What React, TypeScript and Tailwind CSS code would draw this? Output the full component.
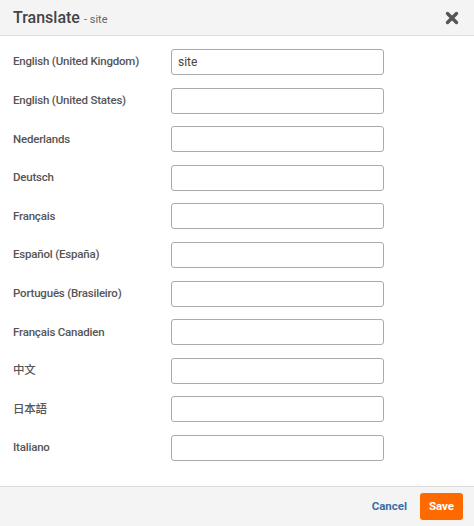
import { X } from "lucide-react";

const languages = [
  { label: "English (United Kingdom)", value: "site" },
  { label: "English (United States)", value: "" },
  { label: "Nederlands", value: "" },
  { label: "Deutsch", value: "" },
  { label: "Français", value: "" },
  { label: "Español (España)", value: "" },
  { label: "Português (Brasileiro)", value: "" },
  { label: "Français Canadien", value: "" },
  { label: "中文", value: "" },
  { label: "日本語", value: "" },
  { label: "Italiano", value: "" },
];

export default function App() {
  return (
    <div
      className="flex h-[526px] w-[474px] flex-col bg-white text-[#555]"
      style={{ fontFamily: "Roboto, 'Noto Sans CJK SC', sans-serif" }}
    >
      <div className="flex h-[36px] items-center justify-between border-b border-[#dcdcdc] bg-[#f4f4f4] pl-[13px] pr-[13px]">
        <h1 className="flex items-baseline gap-[4px]">
          <span className="text-[16px] font-medium text-[#444]">Translate</span>
          <span className="text-[11px] text-[#666]">- site</span>
        </h1>
        <X size={18} strokeWidth={4.5} className="text-[#555]" />
      </div>

      <div className="flex flex-1 flex-col gap-[12.6px] px-[13px] pt-[13px]">
        {languages.map((l) => (
          <div key={l.label} className="flex items-center">
            <label className="w-[158px] text-[11.5px] font-medium tracking-[-0.2px] text-[#555]">
              {l.label}
            </label>
            <input
              defaultValue={l.value}
              className="h-[26px] w-[213px] rounded-[3px] border border-[#aaa] px-[6px] text-[12px] text-[#444] outline-none"
            />
          </div>
        ))}
      </div>

      <div className="flex h-[40px] items-center justify-end gap-[13px] border-t border-[#dcdcdc] bg-[#f4f4f4] pr-[11px]">
        <button className="text-[11.5px] font-bold text-[#3a6ea5]">Cancel</button>
        <button className="h-[27px] w-[43px] rounded-[3px] bg-[#ff6a00] text-[11.5px] font-bold text-white">
          Save
        </button>
      </div>
    </div>
  );
}
